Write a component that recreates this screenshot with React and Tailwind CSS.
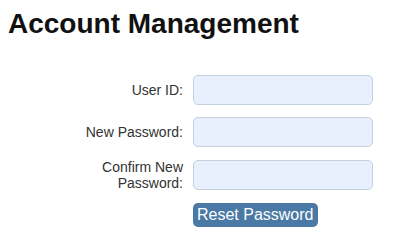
export default function App() {
  const fields = [
    { id: 'userId', label: 'User ID:', type: 'text' },
    { id: 'newPassword', label: 'New Password:', type: 'password' },
    { id: 'confirmPassword', label: 'Confirm New Password:', type: 'password' },
  ];

  return (
    <div className="min-h-screen bg-white px-2 pt-[8px] font-['Liberation_Sans',Arial,sans-serif] text-[#333]">
      <h1 className="text-[28px] font-bold leading-[32px] text-[#111]">Account Management</h1>

      <form className="mt-[35px] ml-[75px] grid grid-cols-[100px_180px] items-center gap-x-[10px] gap-y-[12px]" onSubmit={e => e.preventDefault()}>
        {fields.map(({ id, label, type }) => (
          <div key={id} className="contents">
            <label htmlFor={id} className="text-right text-[14px] leading-[16px]">{label}</label>
            <input
              id={id}
              type={type}
              className="h-[30px] w-[180px] rounded-[5px] border border-[#c3d1de] bg-[#e8f0fe] px-2 text-[14px] outline-none"
            />
          </div>
        ))}
        <div />
        <div>
          <button
            type="submit"
            className="h-[24px] rounded-[5px] bg-[#4a79a5] px-[4px] text-[16px] leading-[24px] text-white"
          >
            Reset Password
          </button>
        </div>
      </form>
    </div>
  );
}
